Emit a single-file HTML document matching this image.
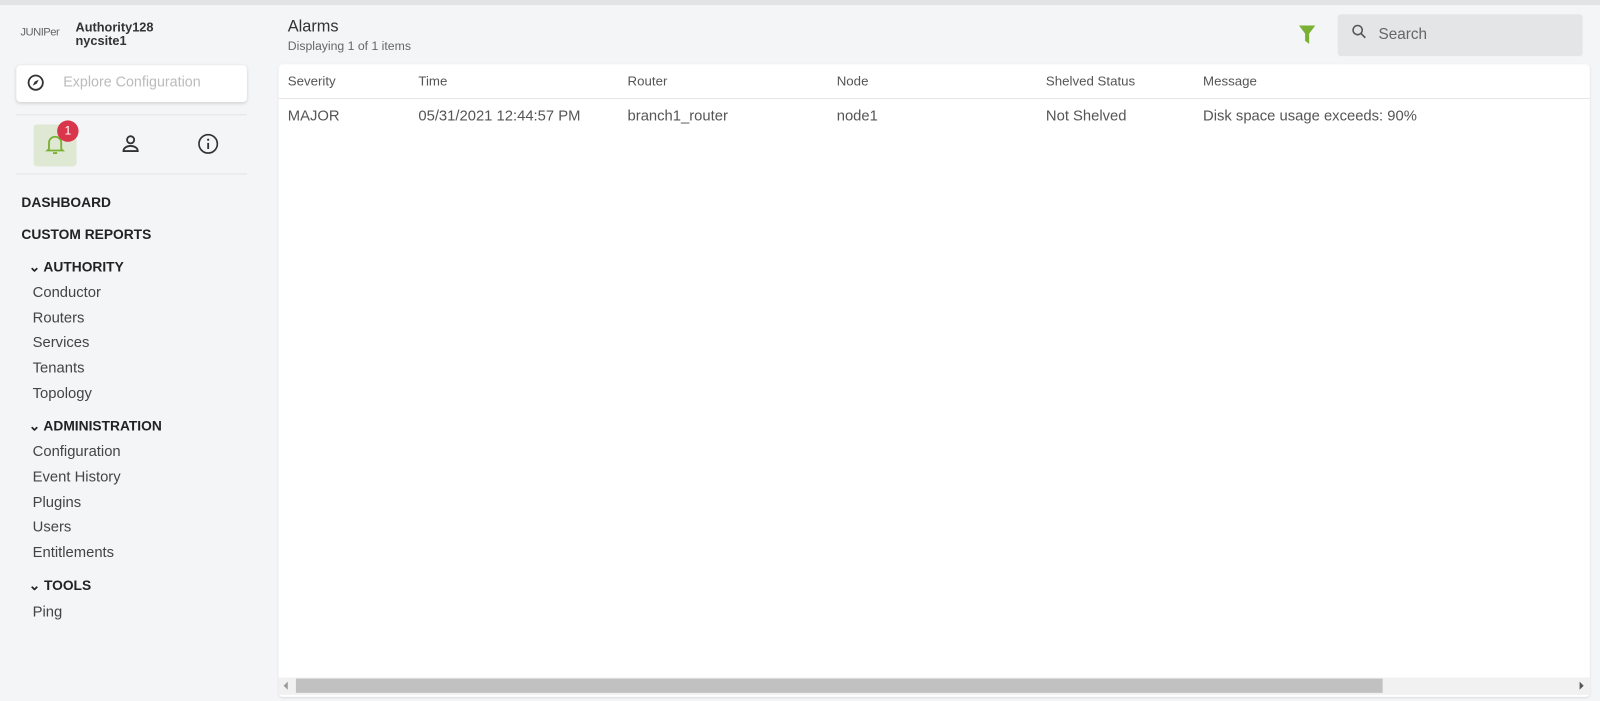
<!DOCTYPE html>
<html><head><style>
*{margin:0;padding:0;box-sizing:border-box}
body{width:1600px;height:701px;background:#f4f5f7;font-family:"Liberation Sans",sans-serif;overflow:hidden;color:#333}
#w{position:absolute;left:0;top:0;width:1568px;height:687px;transform-origin:0 0;transform:scale(1.0204)}
.top{position:absolute;left:0;top:0;width:1568px;height:5px;background:#e2e3e5}
.a{position:absolute;white-space:nowrap}
.nav{font-size:14.5px;color:#444}
.hd{font-size:13.5px;font-weight:bold;color:#222}
.panel{position:absolute;left:273px;top:63px;width:1285px;height:620px;background:#fff;border-radius:4px;box-shadow:0 1px 2px rgba(0,0,0,.1)}
.th{position:absolute;top:9px;font-size:13px;color:#555}
.td{position:absolute;top:43px;font-size:14.5px;color:#555}
</style></head><body><div id="w">
<div class="top"></div>
<div class="a" style="left:20px;top:26px;font-size:11px;color:#666;letter-spacing:-.5px">JUNIPer</div>
<div class="a" style="left:74px;top:21px;font-size:12.5px;font-weight:bold;color:#333;line-height:13px">Authority128<br>nycsite1</div>
<div class="a" style="left:16px;top:64px;width:226px;height:36px;background:#fff;border-radius:4px;box-shadow:0 1px 3px rgba(0,0,0,.15)"></div>
<svg class="a" style="left:26px;top:72px" width="18" height="18" viewBox="0 0 18 18"><circle cx="9" cy="9" r="7" fill="none" stroke="#333" stroke-width="1.8"/><path d="M12 6 L8 8 L6 12 L10 10Z" fill="#333"/></svg>
<div class="a" style="left:62px;top:72px;font-size:14px;color:#bbb">Explore Configuration</div>
<div class="a" style="left:16px;top:112px;width:226px;height:1px;background:#e4e4e4"></div>
<div class="a" style="left:33px;top:122px;width:42px;height:41px;background:#dfe8d3;border-radius:3px"></div>
<svg class="a" style="left:44px;top:131px" width="20" height="22" viewBox="0 0 20 22"><path d="M4 15 V9 a6 6 0 0 1 12 0 V15 L17.5 16.5 H2.5Z M8 19 H12" fill="none" stroke="#7ab135" stroke-width="1.8"/></svg>
<div class="a" style="left:56px;top:118px;width:21px;height:21px;border-radius:50%;background:#d9364b;color:#fff;font-size:12px;text-align:center;line-height:21px">1</div>
<svg class="a" style="left:118px;top:131px" width="20" height="20" viewBox="0 0 20 20"><circle cx="10" cy="6" r="3.5" fill="none" stroke="#333" stroke-width="1.8"/><path d="M3 17 a7 5 0 0 1 14 0Z" fill="none" stroke="#333" stroke-width="1.8"/></svg>
<svg class="a" style="left:193px;top:130px" width="22" height="22" viewBox="0 0 22 22"><circle cx="11" cy="11" r="9" fill="none" stroke="#333" stroke-width="1.6"/><path d="M11 10 V16" stroke="#333" stroke-width="1.8"/><circle cx="11" cy="7" r="1.1" fill="#333"/></svg>
<div class="a" style="left:16px;top:170px;width:226px;height:1px;background:#e4e4e4"></div>
<div class="a hd" style="left:21px;top:191px">DASHBOARD</div>
<div class="a hd" style="left:21px;top:222px">CUSTOM REPORTS</div>
<div class="a hd" style="left:28px;top:254px">⌄ AUTHORITY</div>
<div class="a nav" style="left:32px;top:279px">Conductor</div>
<div class="a nav" style="left:32px;top:304px">Routers</div>
<div class="a nav" style="left:32px;top:328px">Services</div>
<div class="a nav" style="left:32px;top:353px">Tenants</div>
<div class="a nav" style="left:32px;top:378px">Topology</div>
<div class="a hd" style="left:28px;top:410px">⌄ ADMINISTRATION</div>
<div class="a nav" style="left:32px;top:435px">Configuration</div>
<div class="a nav" style="left:32px;top:460px">Event History</div>
<div class="a nav" style="left:32px;top:485px">Plugins</div>
<div class="a nav" style="left:32px;top:509px">Users</div>
<div class="a nav" style="left:32px;top:534px">Entitlements</div>
<div class="a hd" style="left:28px;top:566px">⌄ TOOLS</div>
<div class="a nav" style="left:32px;top:592px">Ping</div>
<div class="a" style="left:282px;top:18px;font-size:16px;color:#333">Alarms</div>
<div class="a" style="left:282px;top:38px;font-size:12px;color:#666">Displaying 1 of 1 items</div>
<svg class="a" style="left:1272px;top:24px" width="18" height="20" viewBox="0 0 18 20"><path d="M1 1 H17 L11 9 V19 L7 16 V9Z" fill="#7ab135"/></svg>
<div class="a" style="left:1311px;top:14px;width:240px;height:41px;background:#e4e5e7;border-radius:3px"></div>
<svg class="a" style="left:1324px;top:23px" width="16" height="16" viewBox="0 0 16 16"><circle cx="6.5" cy="6.5" r="4.5" fill="none" stroke="#555" stroke-width="1.5"/><path d="M10 10 L14 14" stroke="#555" stroke-width="1.6"/></svg>
<div class="a" style="left:1351px;top:25px;font-size:15px;color:#666">Search</div>
<div class="panel">
<div class="a th" style="left:9px">Severity</div>
<div class="a th" style="left:137px">Time</div>
<div class="a th" style="left:342px">Router</div>
<div class="a th" style="left:547px">Node</div>
<div class="a th" style="left:752px">Shelved Status</div>
<div class="a th" style="left:906px">Message</div>
<div class="a" style="left:0;top:33px;width:1285px;height:1px;background:#e6e6e6"></div>
<div class="a td" style="left:9px">MAJOR</div>
<div class="a td" style="left:137px">05/31/2021 12:44:57 PM</div>
<div class="a td" style="left:342px">branch1_router</div>
<div class="a td" style="left:547px">node1</div>
<div class="a td" style="left:752px">Not Shelved</div>
<div class="a td" style="left:906px">Disk space usage exceeds: 90%</div>
<div class="a" style="left:0;top:601px;width:1285px;height:17px;background:#f1f1f1"></div>
<div class="a" style="left:17px;top:602px;width:1065px;height:14px;background:#c1c1c1"></div>
<div class="a" style="left:5px;top:605px;width:0;height:0;border:4px solid transparent;border-right-color:#999;border-left:0"></div>
<div class="a" style="left:1275px;top:605px;width:0;height:0;border:4px solid transparent;border-left-color:#555;border-right:0"></div>
</div>
</div></body></html>
